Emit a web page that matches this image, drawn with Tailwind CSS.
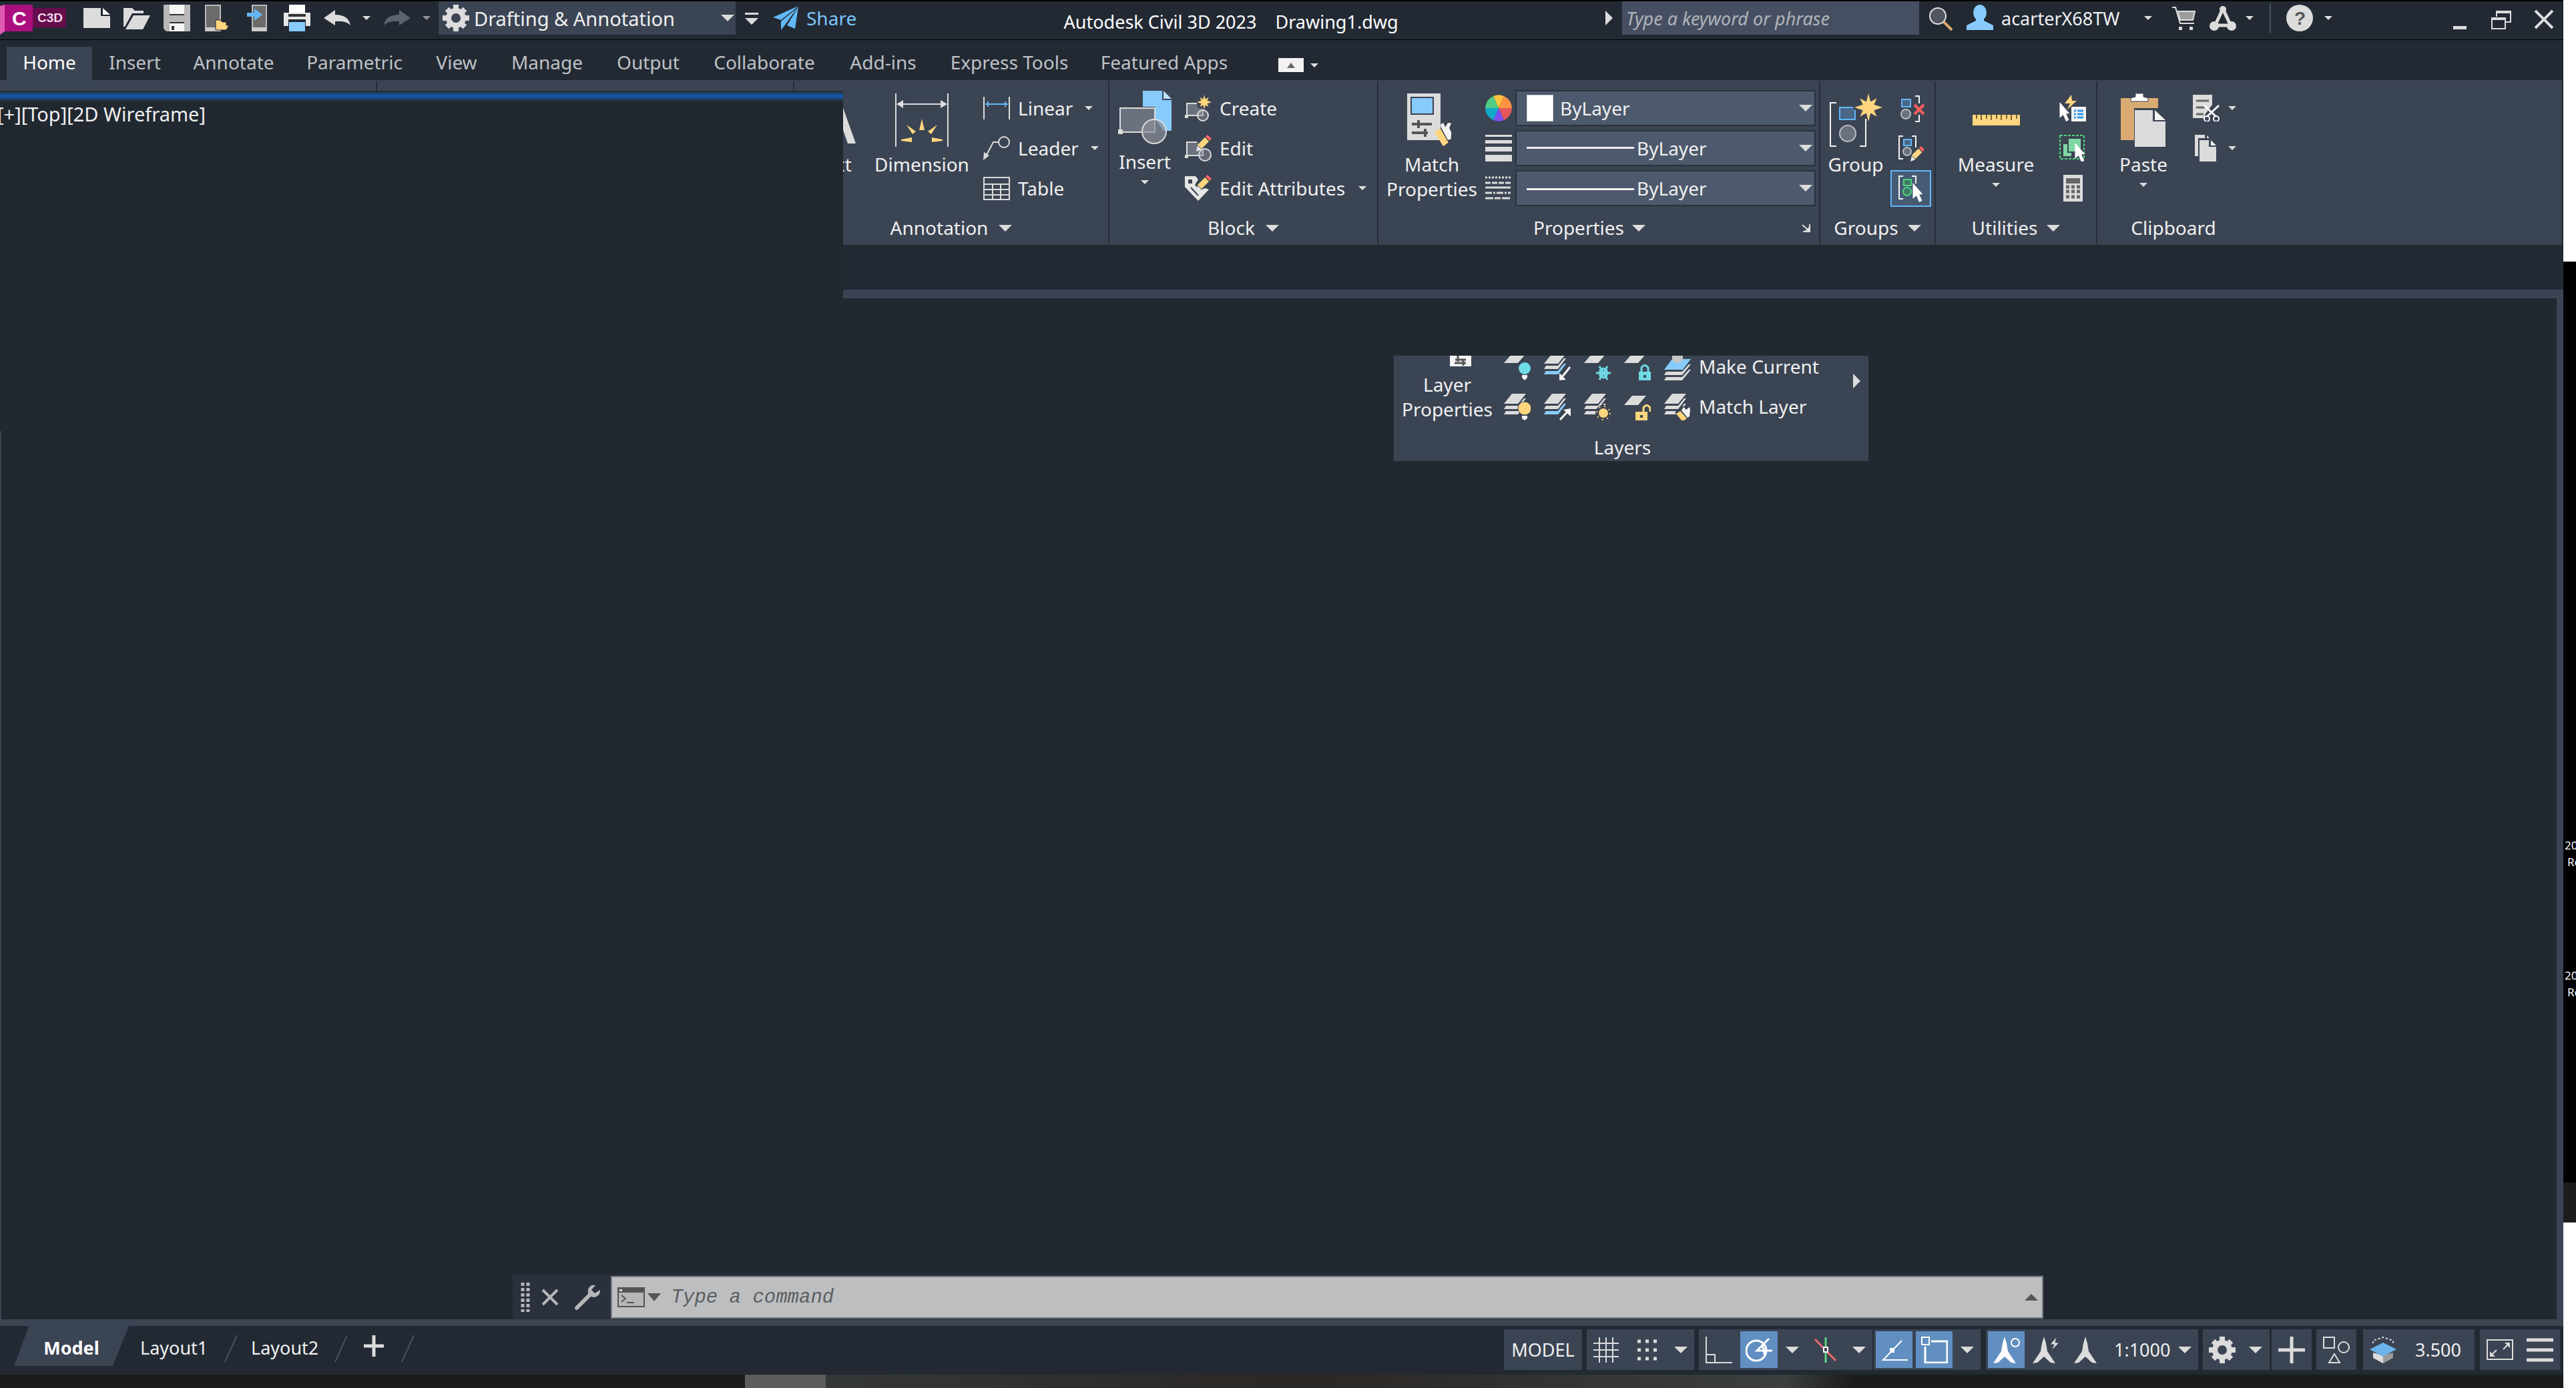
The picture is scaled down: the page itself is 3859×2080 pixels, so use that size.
<!DOCTYPE html>
<html lang="en">
<head>
<meta charset="utf-8">
<title>Autodesk Civil 3D 2023 - Drawing1.dwg</title>
<script src="https://cdn.jsdelivr.net/npm/@tailwindcss/browser@4"></script>
</head>
<body class="flex h-screen w-full overflow-hidden bg-black font-['Noto_Sans','Open_Sans',sans-serif] text-[28px] leading-[37px] text-[#f0f0f0]">

<!-- shared icon shapes -->
<svg class="hidden" aria-hidden="true">
  <symbol id="down" viewBox="0 0 20 10"><path d="M0 0H20L10 10Z" fill="#dcdcdc"/></symbol>
  <symbol id="gear" viewBox="0 0 40 40">
    <g fill="#dcdcdc"><rect x="16" y="0" width="8" height="40"/><rect x="0" y="16" width="40" height="8"/><rect x="16" y="1" width="8" height="38" transform="rotate(45 20 20)"/><rect x="16" y="1" width="8" height="38" transform="rotate(-45 20 20)"/><circle cx="20" cy="20" r="15"/></g>
    <circle cx="20" cy="20" r="7" fill="#3b4453"/>
  </symbol>
  <symbol id="pencil" viewBox="0 0 24 26"><path d="M1 25L3 16L9 22Z" fill="#e8e8e8"/><path d="M3 15L14 4L20 10L9 21Z" fill="#ffd57e"/><path d="M15 3L18 0L24 6L21 9Z" fill="#ff6464"/></symbol>
  <symbol id="star" viewBox="0 0 40 40"><path d="M20 0L23 12L32 7L28 16L40 20L28 24L32 33L23 28L20 40L17 28L8 33L12 24L0 20L12 16L8 7L17 12Z" fill="#ffd57e"/></symbol>
  <symbol id="pointer" viewBox="0 0 14 27"><path d="M0 0L14 16H9L13 25L9 27L5 18L0 22Z" fill="#fff"/></symbol>
  <symbol id="stack" viewBox="0 0 40 40">
    <path d="M12 0H33L21 15H0Z" fill="#dcdcdc"/><path d="M0 23L3 18H21L30 7H33L21 23Z" fill="#dcdcdc"/><path d="M0 31L3 26H21L30 15H33L21 31Z" fill="#dcdcdc"/>
  </symbol>
  <symbol id="brush" viewBox="0 0 40 56"><path d="M0 22L13 13L32 46L20 55Z" fill="#ffd57e"/><path d="M15 11L14 4L20 0L25 10L31 0L39 1L34 12L39 22L38 38L31 40Z" fill="#f4f4f4"/></symbol>
  <symbol id="scale-man" viewBox="0 0 40 40"><path d="M17 0L20 10L22 22L34 40L27 39L17 30L7 39L0 40L12 22L14 10Z" fill="currentColor"/></symbol>
</svg>

<div class="flex min-w-0 flex-1 flex-col bg-[#222933]">
  <div class="relative flex min-h-0 flex-1 flex-col">

  <!-- title bar -->
  <header class="flex h-[60px] shrink-0 border-t-2 border-b border-black">
    <div class="flex h-[50px] items-center">
      <svg class="h-[50px] w-[100px]" viewBox="0 0 100 50" role="img" aria-label="Civil 3D">
        <path d="M0 7L7 5V45L0 50Z" fill="#e05cb4"/><rect x="7" y="5" width="42" height="40" fill="#ab0f7e"/><rect x="49" y="10" width="50" height="29" fill="#640c4c"/>
        <text x="18" y="36" font-size="30" font-weight="700" fill="#fff" font-family="Liberation Sans, sans-serif">C</text>
        <text x="56" y="31" font-size="19" font-weight="700" fill="#f3d6ea" font-family="Liberation Sans, sans-serif">C3D</text>
      </svg>
      <div class="ml-[25px] flex items-center gap-5">
        <button aria-label="New"><svg class="size-10" viewBox="0 0 40 40"><path d="M0 5H26V17H40V35H0Z" fill="#dcdcdc"/><path d="M29 5L40 15H29Z" fill="#fff"/></svg></button>
        <button aria-label="Open"><svg class="size-10" viewBox="0 0 40 40"><path d="M0 5H13L17 9H30V13H13L2 33H0Z" fill="#dcdcdc"/><path d="M15 16H40L29 37H3Z" fill="#dcdcdc"/></svg></button>
        <button aria-label="Save"><svg class="size-10" viewBox="0 0 40 40"><path d="M0 0H40V40H4L0 36Z" fill="#b8b8b8"/><rect x="9" y="0" width="22" height="15" fill="#f6f6f6"/><path d="M9 15H31M9 27H31" stroke="#333" stroke-width="2"/><rect x="9" y="28" width="22" height="12" fill="#f6f6f6"/><rect x="12" y="32" width="4" height="6" fill="#333"/></svg></button>
        <button aria-label="Open from web and mobile"><svg class="size-10" viewBox="0 0 40 40"><rect x="3" y="1" width="22" height="38" fill="#6b6b6b" stroke="#bbb" stroke-width="2"/><rect x="3" y="34" width="22" height="6" fill="#ccc"/><path d="M18 23H25L28 26H34V31H38L34 38H18Z" fill="#ffd57e" stroke="#222933"/></svg></button>
        <button aria-label="Save to web and mobile"><svg class="size-10" viewBox="0 0 40 40"><rect x="13" y="1" width="21" height="38" fill="#6b6b6b" stroke="#bbb" stroke-width="2"/><rect x="13" y="34" width="21" height="6" fill="#ccc"/><path d="M5 12H16V6L28 15L16 24V18H5Z" fill="#62b8f8"/></svg></button>
        <button aria-label="Plot"><svg class="size-10" viewBox="0 0 40 40"><rect x="8" y="0" width="24" height="12" fill="#fff"/><path d="M0 12H40V32H33V22H7V32H0Z" fill="#e6e6e6"/><path d="M7 16H33" stroke="#333" stroke-width="4"/><rect x="8" y="26" width="24" height="14" fill="#87cbfc"/></svg></button>
        <button aria-label="Undo"><svg class="size-10" viewBox="0 0 40 40"><path d="M0 20L17 8V15C30 15 38 20 40 31C34 25 28 25 17 25V31Z" fill="#dcdcdc"/></svg></button>
      </div>
      <button class="ml-[18px]" aria-label="Undo list"><svg class="h-2 w-3"><use href="#down"/></svg></button>
      <button class="ml-5" aria-label="Redo"><svg class="size-10" viewBox="0 0 40 40"><path d="M40 20L23 8V15C10 15 2 20 0 31C6 25 12 25 23 25V31Z" fill="#5e646d"/></svg></button>
      <button class="ml-[18px] opacity-60" aria-label="Redo list"><svg class="h-2 w-3"><use href="#down"/></svg></button>
      <div class="relative ml-3 h-[50px] w-[445px]">
        <select aria-label="Workspace" class="h-full w-full appearance-none bg-[#3b4453] pl-[53px] text-[29px]"><option>Drafting &amp; Annotation</option></select>
        <svg class="pointer-events-none absolute top-[5px] left-[6px] size-10"><use href="#gear"/></svg>
        <svg class="pointer-events-none absolute top-5 right-[2px] h-[10px] w-5"><use href="#down"/></svg>
      </div>
      <button class="ml-[14px]" aria-label="Customize"><svg class="h-5 w-5" viewBox="0 0 20 20"><path d="M0 2H20V5H0ZM0 10H20L10 20Z" fill="#dcdcdc"/></svg></button>
      <a href="#" class="ml-[22px] flex items-center gap-3 text-[#7cc6fb]"><svg class="h-9 w-[38px]" viewBox="0 0 38 36"><path d="M0 17L38 0L12 21ZM12 36V23L36 3L19 27ZM21 29L38 1L33 34Z" fill="#62b8f8"/></svg>Share</a>
    </div>
    <h1 class="min-w-0 flex-1 truncate pt-3 text-center text-[27px] text-white">Autodesk Civil 3D 2023 &nbsp;&nbsp; Drawing1.dwg</h1>
    <div class="flex h-[50px] items-center">
      <button aria-label="Collapse search"><svg class="h-[22px] w-[11px]" viewBox="0 0 11 22"><path d="M0 0L11 11L0 22Z" fill="#dcdcdc"/></svg></button>
      <input aria-label="Search" placeholder="Type a keyword or phrase" class="ml-[14px] h-[50px] w-[445px] bg-[#464f61] px-[6px] text-[27px] italic placeholder:text-[#b0b4ba]">
      <button class="ml-[15px]" aria-label="Find"><svg class="size-10" viewBox="0 0 40 40"><circle cx="13" cy="17" r="12" fill="#4f565f" stroke="#e0e0e0" stroke-width="2"/><path d="M22 26L34 38" stroke="#d9a868" stroke-width="4"/></svg></button>
      <svg class="ml-4 size-10" viewBox="0 0 40 40"><ellipse cx="20" cy="12" rx="10" ry="12" fill="#87cbfc"/><path d="M14 20H26V24L40 31V38H0V31L14 24Z" fill="#87cbfc"/></svg>
      <button class="ml-3 flex w-[226px] items-center justify-between text-[27px]">acarterX68TW <svg class="h-2 w-3"><use href="#down"/></svg></button>
      <button class="ml-[30px]" aria-label="App store"><svg class="size-10" viewBox="0 0 40 40"><path d="M0 4H5L12 28H33" stroke="#dcdcdc" stroke-width="2" fill="none"/><path d="M8 10H34L31 23H12Z" fill="#9c9c9c" stroke="#dcdcdc" stroke-width="2"/><rect x="10" y="33" width="5" height="5" fill="#dcdcdc"/><rect x="26" y="33" width="5" height="5" fill="#dcdcdc"/></svg></button>
      <button class="ml-4" aria-label="Autodesk app"><svg class="size-10" viewBox="0 0 40 40"><path d="M20 6L8 32M20 6L32 32M8 31H32" stroke="#dcdcdc" stroke-width="5" fill="none"/><circle cx="20" cy="7" r="5" fill="#dcdcdc"/><circle cx="7" cy="32" r="7" fill="#dcdcdc"/><circle cx="33" cy="32" r="7" fill="#dcdcdc"/></svg></button>
      <button class="ml-[14px]" aria-label="Autodesk app menu"><svg class="h-2 w-3"><use href="#down"/></svg></button>
      <span class="ml-6 h-[45px] w-[2px] bg-[#464f61]"></span>
      <button class="ml-[22px]" aria-label="Help"><svg class="size-[42px]" viewBox="0 0 42 42"><circle cx="21" cy="21" r="20" fill="#dcdcdc"/><text x="13" y="31" font-size="28" font-weight="700" fill="#555" font-family="Liberation Sans, sans-serif">?</text></svg></button>
      <button class="ml-4" aria-label="Help menu"><svg class="h-2 w-3"><use href="#down"/></svg></button>
      <button class="ml-[181px]" aria-label="Minimize"><svg class="h-10 w-5" viewBox="0 0 20 40"><rect y="32" width="20" height="5" fill="#dcdcdc"/></svg></button>
      <button class="ml-[37px]" aria-label="Restore"><svg class="h-10 w-[30px]" viewBox="0 0 30 40"><path d="M8 18V10H29V26H22M1 20H21V36H1Z" stroke="#dcdcdc" stroke-width="2" fill="none"/><path d="M8 11H29M1 21H21" stroke="#dcdcdc" stroke-width="4"/></svg></button>
      <button class="mr-[14px] ml-[34px]" aria-label="Close"><svg class="h-10 w-[30px]" viewBox="0 0 30 40"><path d="M2 9L28 35M28 9L2 35" stroke="#dcdcdc" stroke-width="4"/></svg></button>
    </div>
  </header>

  <!-- ribbon tabs -->
  <nav class="flex h-[60px] shrink-0 items-end pl-[10px] text-[#bfc2c6]">
    <a href="#" class="w-[128px] bg-[#3b4453] pt-[5px] pb-2 text-center text-white">Home</a>
    <a href="#" class="w-[128px] pt-[5px] pb-2 text-center">Insert</a>
    <a href="#" class="w-[168px] pt-[5px] pb-2 text-center">Annotate</a>
    <a href="#" class="w-[194px] pt-[5px] pb-2 text-center">Parametric</a>
    <a href="#" class="w-[112px] pt-[5px] pb-2 text-center">View</a>
    <a href="#" class="w-[159px] pt-[5px] pb-2 text-center">Manage</a>
    <a href="#" class="w-[144px] pt-[5px] pb-2 text-center">Output</a>
    <a href="#" class="w-[204px] pt-[5px] pb-2 text-center">Collaborate</a>
    <a href="#" class="w-[152px] pt-[5px] pb-2 text-center">Add-ins</a>
    <a href="#" class="w-[226px] pt-[5px] pb-2 text-center">Express Tools</a>
    <a href="#" class="w-[238px] pt-[5px] pb-2 text-center">Featured Apps</a>
    <button class="mb-3 ml-[52px] flex items-center gap-[10px]" aria-label="Minimize ribbon"><svg class="h-[21px] w-[38px]" viewBox="0 0 38 21"><rect width="38" height="21" fill="#f2f2f2"/><path d="M13 15L19 7L25 15Z" fill="#666"/></svg><svg class="h-2 w-3"><use href="#down"/></svg></button>
  </nav>

  <!-- ribbon -->
  <div class="mr-[2px] flex h-[247px] shrink-0 bg-[#3b4453]">
    <section class="my-[2px] w-[565px] shrink-0 border-r-2 border-[#262d38]"></section>
    <section class="my-[2px] w-[625px] shrink-0 border-r-2 border-[#262d38]"></section>

    <section class="my-[2px] flex w-[472px] shrink-0 flex-col border-r-2 border-[#262d38] pt-[10px]">
      <div class="flex h-[191px]">
        <button class="ml-[19px] flex w-20 flex-col items-center gap-2 pt-2"><svg class="size-20" viewBox="0 0 80 80"><path d="M32 5H48L73 75H61L54 55H26L19 75H7Z" fill="#dcdcdc"/></svg>Text</button>
        <button class="ml-[17px] flex w-[150px] flex-col items-center gap-2 pt-2"><svg class="size-20" viewBox="0 0 80 80"><path d="M1 0V80M79 0V80M4 16H76" stroke="#dcdcdc" stroke-width="2"/><path d="M2 16L12 10V22ZM78 16L68 10V22Z" fill="#dcdcdc"/><path d="M40 38L44 55H36ZM17 47L31 57L26 61ZM63 47L49 57L54 61ZM9 69L25 66V73L9 71ZM71 69L55 66V73L71 71Z" fill="#ffd57e"/></svg>Dimension</button>
        <div class="ml-[17px] flex flex-col">
          <button class="flex h-[60px] items-center"><svg class="size-10" viewBox="0 0 40 40"><path d="M1 3V37M39 3V37" stroke="#dcdcdc" stroke-width="2"/><path d="M3 14H37M7 10V18M33 10V18" stroke="#62b8f8" stroke-width="2"/></svg><span class="mr-[18px] ml-3">Linear</span><svg class="h-2 w-3"><use href="#down"/></svg></button>
          <button class="flex h-[60px] items-center"><svg class="size-10" viewBox="0 0 40 40"><path d="M4 32L15 11H24" stroke="#dcdcdc" stroke-width="2" fill="none"/><circle cx="31" cy="11" r="8" stroke="#dcdcdc" stroke-width="2" fill="none"/><path d="M0 38L1 26L9 31Z" fill="#dcdcdc"/></svg><span class="mr-[18px] ml-3">Leader</span><svg class="h-2 w-3"><use href="#down"/></svg></button>
          <button class="flex h-[60px] items-center"><svg class="size-10" viewBox="0 0 40 40"><path d="M1 4H39V37H1ZM1 14H39M1 22H39M1 30H39M14 14V37M26 14V37" stroke="#dcdcdc" stroke-width="2" fill="none"/></svg><span class="ml-3">Table</span></button>
        </div>
      </div>
      <button class="flex items-center justify-center gap-4">Annotation <svg class="h-[10px] w-5"><use href="#down"/></svg></button>
    </section>

    <section class="my-[2px] flex w-[403px] shrink-0 flex-col border-r-2 border-[#262d38] pt-[10px]">
      <div class="flex h-[191px]">
        <button class="ml-[13px] flex w-20 flex-col items-center gap-2 pt-1"><svg class="size-20" viewBox="0 0 80 80"><path d="M37 0H66V14H80V60H68L56 42V24H37Z" fill="#87cbfc"/><path d="M68 0L80 12H68Z" fill="#b9e0fc"/><rect x="3" y="26" width="52" height="36" fill="#6b717d" stroke="#dcdcdc" stroke-width="2"/><rect x="0" y="58" width="7" height="7" fill="#dcdcdc"/><circle cx="54" cy="61" r="18" fill="#8b909a" fill-opacity=".7" stroke="#dcdcdc" stroke-width="2"/></svg>Insert<svg class="h-2 w-3"><use href="#down"/></svg></button>
        <div class="ml-5 flex flex-col">
          <button class="flex h-[60px] items-center"><svg class="size-10" viewBox="0 0 40 40"><path d="M3 13H18L20 20H27V31H3Z" fill="#6b717d"/><path d="M18 13H3V31H27V22" stroke="#dcdcdc" stroke-width="2" fill="none"/><rect x="0" y="30" width="5" height="5" fill="#dcdcdc"/><circle cx="27" cy="31" r="8" fill="#8b909a" fill-opacity=".5" stroke="#dcdcdc" stroke-width="2"/><use href="#star" x="18" y="0" width="22" height="22"/></svg><span class="ml-3">Create</span></button>
          <button class="flex h-[60px] items-center"><svg class="size-10" viewBox="0 0 40 40"><path d="M3 11H20V20H27V31H3Z" fill="#6b717d"/><path d="M18 11H3V31H27V22" stroke="#dcdcdc" stroke-width="2" fill="none"/><rect x="0" y="30" width="5" height="5" fill="#dcdcdc"/><circle cx="30" cy="30" r="9" fill="#8b909a" fill-opacity=".5" stroke="#dcdcdc" stroke-width="2"/><use href="#pencil" x="16" y="0" width="24" height="26"/></svg><span class="ml-3">Edit</span></button>
          <button class="flex h-[60px] items-center"><svg class="size-10" viewBox="0 0 40 40"><path d="M0 2H16L20 7L15 15L22 23L31 20L36 22L20 39L0 18Z" fill="#e6e6e6"/><rect x="5" y="7" width="6" height="6" fill="#3b4453"/><path d="M9 19L20 31" stroke="#3b4453" stroke-width="2"/><use href="#pencil" x="16" y="0" width="24" height="26"/></svg><span class="mr-5 ml-3">Edit Attributes</span><svg class="h-2 w-3"><use href="#down"/></svg></button>
        </div>
      </div>
      <button class="flex items-center justify-center gap-4">Block <svg class="h-[10px] w-5"><use href="#down"/></svg></button>
    </section>

    <section class="my-[2px] flex w-[662px] shrink-0 flex-col border-r-2 border-[#262d38] pt-[10px]">
      <div class="flex h-[191px]">
        <button class="ml-[10px] flex w-[140px] flex-col items-center gap-2 pt-2"><svg class="size-20" viewBox="0 0 80 80"><rect x="3" y="0" width="50" height="70" fill="#dcdcdc"/><rect x="9" y="6" width="33" height="25" fill="#87cbfc" stroke="#3b4453" stroke-width="2"/><path d="M10 46H40M20 40V52M10 59H34M30 53V65" stroke="#555" stroke-width="4"/><use href="#brush" x="36" y="44" width="42" height="36"/></svg><span>Match<br>Properties</span></button>
        <div class="ml-[10px] flex flex-col gap-5 pt-[10px]">
          <svg class="size-10" viewBox="0 0 40 40"><path d="M20 20L12 2A20 20 0 0 1 28 2Z" fill="#ffc43d"/><path d="M20 20L28 2A20 20 0 0 1 40 20Z" fill="#ff9340"/><path d="M20 20H40A20 20 0 0 1 28 38Z" fill="#e5575c"/><path d="M20 20L28 38A20 20 0 0 1 12 38Z" fill="#7f4ff5"/><path d="M20 20L12 38A20 20 0 0 1 0 20Z" fill="#12aacb"/><path d="M20 20H0A20 20 0 0 1 12 2Z" fill="#53cb82"/></svg>
          <svg class="size-10" viewBox="0 0 40 40" fill="#dcdcdc"><rect width="40" height="3"/><rect y="8" width="40" height="5"/><rect y="18" width="40" height="7"/><rect y="30" width="40" height="10"/></svg>
          <svg class="size-10" viewBox="0 0 40 40" stroke="#dcdcdc" stroke-width="3"><path d="M0 4H38" stroke-dasharray="3 2"/><path d="M0 12H38" stroke-dasharray="8 2"/><path d="M0 19H38"/><path d="M0 27H38" stroke-dasharray="10 2 3 2"/><path d="M0 35H38" stroke-dasharray="12 2 9 2"/></svg>
        </div>
        <div class="ml-[5px] flex flex-col gap-[6px] pt-[3px]">
          <div class="relative h-[54px] w-[450px]"><select aria-label="Color" class="h-full w-full appearance-none border-2 border-[#2a313d] bg-[#4d596c] pl-[65px]"><option>ByLayer</option></select><span class="pointer-events-none absolute top-[7px] left-[17px] size-10 border border-[#ccc] bg-white"></span><svg class="pointer-events-none absolute top-[22px] right-[5px] h-[10px] w-5"><use href="#down"/></svg></div>
          <div class="relative h-[54px] w-[450px]"><select aria-label="Lineweight" class="h-full w-full appearance-none border-2 border-[#2a313d] bg-[#4d596c] pl-[180px]"><option>ByLayer</option></select><span class="pointer-events-none absolute top-[25px] left-[17px] h-[3px] w-[161px] bg-[#f0f0f0]"></span><svg class="pointer-events-none absolute top-[22px] right-[5px] h-[10px] w-5"><use href="#down"/></svg></div>
          <div class="relative h-[54px] w-[450px]"><select aria-label="Linetype" class="h-full w-full appearance-none border-2 border-[#2a313d] bg-[#4d596c] pl-[180px]"><option>ByLayer</option></select><span class="pointer-events-none absolute top-[27px] left-[17px] h-[3px] w-[161px] bg-[#f0f0f0]"></span><svg class="pointer-events-none absolute top-[22px] right-[5px] h-[10px] w-5"><use href="#down"/></svg></div>
        </div>
      </div>
      <div class="flex items-center pl-[232px]"><button class="flex items-center gap-3">Properties <svg class="h-[10px] w-5"><use href="#down"/></svg></button>
      <button class="mr-[13px] ml-auto" aria-label="Properties dialog"><svg class="h-3 w-[13px]" viewBox="0 0 13 12"><path d="M1 1L9 8M12 0V11H2" stroke="#dcdcdc" stroke-width="2" fill="none"/><path d="M12 3V11H4Z" fill="#dcdcdc"/></svg></button></div>
    </section>

    <section class="my-[2px] flex w-[173px] shrink-0 flex-col border-r-2 border-[#262d38] pt-[10px]">
      <div class="flex h-[191px]">
        <button class="ml-[13px] flex w-20 flex-col items-center gap-2 pt-2"><svg class="size-20" viewBox="0 0 80 80"><path d="M11 14H2V79H11M46 79H55V38" stroke="#f4f4f4" stroke-width="2" fill="none"/><path d="M36 21H16V39H39V25" stroke="#62b8f8" stroke-width="2" fill="#4a6788"/><circle cx="28" cy="60" r="12" fill="#6b717d" stroke="#b8bbc0" stroke-width="2"/><use href="#star" x="38" y="0" width="42" height="42"/></svg>Group</button>
        <div class="ml-3 flex w-[61px] flex-col gap-[5px] pt-[3px]">
          <button class="flex h-[55px] items-center justify-center" aria-label="Ungroup"><svg class="size-10" viewBox="0 0 40 40"><rect x="6" y="6" width="13" height="11" fill="#4a6788" stroke="#62b8f8" stroke-width="2"/><circle cx="12" cy="28" r="7" fill="#6b717d" stroke="#b8bbc0" stroke-width="2"/><path d="M26 1H32V12M32 29V39H26" stroke="#f4f4f4" stroke-width="2" fill="none"/><path d="M25 14L39 28M39 14L25 28" stroke="#ff5c5c" stroke-width="4"/></svg></button>
          <button class="flex h-[55px] items-center justify-center" aria-label="Group edit"><svg class="size-10" viewBox="0 0 40 40"><path d="M8 1H2V35H8M21 1H27V18" stroke="#f4f4f4" stroke-width="2" fill="none"/><rect x="9" y="6" width="11" height="9" fill="#4a6788" stroke="#62b8f8" stroke-width="2"/><circle cx="14" cy="24" r="6" fill="#6b717d" stroke="#b8bbc0" stroke-width="2"/><use href="#pencil" x="18" y="16" width="22" height="24"/></svg></button>
          <button class="flex h-[55px] items-center justify-center border-2 border-[#62b8f8] bg-[#465b74]" aria-label="Group selection on/off"><svg class="size-10" viewBox="0 0 40 40"><path d="M8 1H2V35H8M21 1H27V12" stroke="#f4f4f4" stroke-width="2" fill="none"/><rect x="9" y="6" width="11" height="9" fill="#3f7a67" stroke="#4fd47c" stroke-width="2"/><circle cx="14" cy="24" r="6" fill="#3f7a67" stroke="#4fd47c" stroke-width="2"/><use href="#pointer" x="22" y="11" width="16" height="29"/></svg></button>
        </div>
      </div>
      <button class="flex items-center justify-center gap-[14px]">Groups <svg class="h-[10px] w-5"><use href="#down"/></svg></button>
    </section>

    <section class="my-[2px] flex w-[242px] shrink-0 flex-col border-r-2 border-[#262d38] pt-[10px]">
      <div class="flex h-[191px]">
        <button class="ml-[30px] flex w-[120px] flex-col items-center gap-2 pt-2"><svg class="size-20" viewBox="0 0 80 80"><rect x="5" y="32" width="71" height="16" fill="#ffd57e"/><path d="M11 32V38M18 32V40M26 32V38M33 32V40M41 32V38M48 32V40M56 32V38M63 32V40M71 32V38" stroke="#7a6636" stroke-width="2"/></svg>Measure<svg class="h-2 w-3"><use href="#down"/></svg></button>
        <div class="ml-[35px] flex flex-col gap-5 pt-[10px]">
          <button aria-label="Quick select"><svg class="size-10" viewBox="0 0 40 40"><use href="#pointer" x="0" y="11" width="16" height="29"/><path d="M18 0L8 13H16L12 22L26 9H19Z" fill="#ffd57e"/><rect x="18" y="18" width="22" height="22" fill="#f4f4f4"/><path d="M22 24H25M27 24H36M22 29H25M27 29H36M22 34H25M27 34H36" stroke="#2c96e8" stroke-width="3"/></svg></button>
          <button aria-label="Select all"><svg class="size-10" viewBox="0 0 40 40"><rect x="1" y="1" width="36" height="35" fill="none" stroke="#4fd47c" stroke-width="2" stroke-dasharray="4 2"/><path d="M14 6H32V25H14ZM6 14H12V27H18V32H6Z" fill="#7fd6a0"/><use href="#pointer" x="23" y="12" width="16" height="29"/></svg></button>
          <button aria-label="Quick calculator"><svg class="size-10" viewBox="0 0 40 40"><rect x="6" y="0" width="29" height="40" fill="#dcdcdc"/><rect x="10" y="5" width="21" height="8" fill="#666"/><path d="M10 18H31M10 25H31M10 33H31" stroke="#666" stroke-width="5" stroke-dasharray="5 3"/></svg></button>
        </div>
      </div>
      <button class="flex items-center justify-center gap-[14px]">Utilities <svg class="h-[10px] w-5"><use href="#down"/></svg></button>
    </section>

    <section class="my-[2px] flex w-[228px] shrink-0 flex-col pt-[10px]">
      <div class="flex h-[191px]">
        <button class="ml-[29px] flex w-20 flex-col items-center gap-2 pt-2"><svg class="size-20" viewBox="0 0 80 80"><path d="M6 7H62V22H26V70H6Z" fill="#d9ab73"/><path d="M21 12V7L28 5V0H40V5L47 7V12Z" fill="#fff" stroke="#3b4453"/><path d="M27 25H54V42H73V80H27Z" fill="#dcdcdc"/><path d="M57 25L73 40H57Z" fill="#f4f4f4"/></svg>Paste<svg class="h-2 w-3"><use href="#down"/></svg></button>
        <div class="ml-[34px] flex flex-col">
          <button class="flex h-[60px] items-center gap-[13px]" aria-label="Cut"><svg class="size-10" viewBox="0 0 40 40"><path d="M0 0H29V15L18 30V35H0Z" fill="#dcdcdc"/><path d="M5 9H24M5 19H18M5 29H16" stroke="#666" stroke-width="3"/><path d="M17 16L34 32M39 16L22 32" stroke="#fff" stroke-width="3"/><circle cx="21" cy="36" r="4" fill="none" stroke="#fff" stroke-width="2"/><circle cx="35" cy="36" r="4" fill="none" stroke="#fff" stroke-width="2"/></svg><svg class="h-2 w-3"><use href="#down"/></svg></button>
          <button class="flex h-[60px] items-center gap-[13px]" aria-label="Copy"><svg class="size-10" viewBox="0 0 40 40"><path d="M3 0H18V5H8V32H3Z" fill="#dcdcdc"/><path d="M21 1L25 5H21Z" fill="#dcdcdc"/><path d="M10 8H24V18H35V40H10Z" fill="#dcdcdc"/><path d="M27 8L35 16H27Z" fill="#f4f4f4"/></svg><svg class="h-2 w-3"><use href="#down"/></svg></button>
        </div>
      </div>
      <span class="text-center">Clipboard</span>
    </section>
  </div>

  <!-- drawing area -->
  <div class="h-[67px] shrink-0"></div>
  <main class="relative flex min-h-0 flex-1 flex-col justify-end border-t-[13px] border-r-[10px] border-b-[10px] border-l-2 border-[#3b4453] bg-[#212830]">
    <!-- torn-off Layers panel -->
    <section class="absolute top-[86px] left-[2086px] flex h-[158px] w-[711px] flex-col justify-end overflow-hidden bg-[#3b4453] pb-[2px]">
      <div class="flex items-end">
        <button class="ml-[14px] flex w-[132px] flex-col items-center"><svg class="ml-10 h-5 w-8" viewBox="0 0 32 20"><rect width="32" height="20" fill="#f4f4f4"/><path d="M8 10H24M12 3V13M7 15H24M20 11V19" stroke="#555" stroke-width="3"/></svg><span class="mt-[9px] text-center">Layer<br>Properties</span></button>
        <div class="mb-[2px] ml-[19px] grid grid-cols-[repeat(5,40px)] gap-5">
          <button aria-label="Layer off"><svg class="size-10" viewBox="0 0 40 40"><path d="M12 0H33L21 14H0Z" fill="#dcdcdc"/><circle cx="31" cy="22" r="9" fill="#6fdbe6"/><path d="M27 32H35V36L31 40L27 36Z" fill="#f4f4f4"/></svg></button>
          <button aria-label="Isolate"><svg class="size-10" viewBox="0 0 40 40"><use href="#stack"/><path d="M0 31L3 26H21L30 15H33L21 31Z" fill="#87cbfc"/><path d="M39 20L27 35" stroke="#f4f4f4" stroke-width="3"/><path d="M23 40V29L33 39Z" fill="#f4f4f4"/></svg></button>
          <button aria-label="Freeze"><svg class="size-10" viewBox="0 0 40 40"><path d="M12 0H33L21 14H0Z" fill="#dcdcdc"/><path d="M18 29H40M23 19L35 39M35 19L23 39M24 25L29 22L34 25V33L29 36L24 33Z" stroke="#6fdbe6" stroke-width="3" fill="none"/></svg></button>
          <button aria-label="Lock"><svg class="size-10" viewBox="0 0 40 40"><path d="M12 0H33L21 14H0Z" fill="#dcdcdc"/><rect x="22" y="27" width="18" height="13" fill="#6fdbe6"/><path d="M26 28V21Q31 14 36 21V28" stroke="#6fdbe6" stroke-width="3" fill="none"/><rect x="29" y="32" width="4" height="4" fill="#3b4453"/></svg></button>
          <button aria-label="Make current"><svg class="size-10" viewBox="0 0 40 40"><path d="M12 8H40L28 24H0Z" fill="#87cbfc"/><path d="M0 32L3 27H27L37 16H40L27 32ZM0 40L3 35H27L37 24H40L27 40Z" fill="#dcdcdc"/><path d="M12 0H28V10L20 15L12 10Z" fill="#c4c4c4"/></svg></button>
          <button aria-label="Turn all layers on"><svg class="size-10" viewBox="0 0 40 40"><use href="#stack"/><circle cx="31" cy="22" r="10" fill="#ffd57e" stroke="#3b4453"/><path d="M27 33H35V37L31 40L27 37Z" fill="#f4f4f4"/></svg></button>
          <button aria-label="Unisolate"><svg class="size-10" viewBox="0 0 40 40"><use href="#stack"/><path d="M0 31L3 26H21L30 15H33L21 31Z" fill="#87cbfc"/><path d="M24 39L36 26" stroke="#f4f4f4" stroke-width="3"/><path d="M40 22V34L29 24Z" fill="#f4f4f4"/></svg></button>
          <button aria-label="Thaw"><svg class="size-10" viewBox="0 0 40 40"><use href="#stack"/><circle cx="29" cy="29" r="12" fill="#3b4453"/><circle cx="29" cy="29" r="7" fill="#ffd57e"/><circle cx="29" cy="29" r="10" fill="none" stroke="#ffd57e" stroke-width="2" stroke-dasharray="2 6"/></svg></button>
          <button aria-label="Unlock"><svg class="size-10" viewBox="0 0 40 40"><path d="M12 3H33L21 17H0Z" fill="#dcdcdc"/><rect x="17" y="27" width="18" height="13" fill="#ffd57e"/><path d="M29 27V21Q34 14 39 21V27" stroke="#ffd57e" stroke-width="3" fill="none"/><rect x="24" y="32" width="4" height="4" fill="#3b4453"/></svg></button>
          <button aria-label="Match layer"><svg class="size-10" viewBox="0 0 40 40"><use href="#stack"/><path d="M16 28L28 18L40 28L34 40H26Z" fill="#3b4453"/><path d="M18 30L24 26L34 37L30 40H26Z" fill="#ffd57e"/><path d="M26 25L29 20L33 24L38 20L39 24L38 34L35 36Z" fill="#f4f4f4"/></svg></button>
        </div>
        <div class="mb-1 ml-3 flex flex-col gap-[23px]"><a href="#">Make Current</a><a href="#">Match Layer</a></div>
        <button class="mr-3 mb-[50px] ml-auto" aria-label="Expand"><svg class="h-[22px] w-[11px]" viewBox="0 0 11 22"><path d="M0 0L11 11L0 22Z" fill="#dcdcdc"/></svg></button>
      </div>
      <span class="mt-5 pr-[26px] text-center">Layers</span>
    </section>

    <!-- command line -->
    <div class="ml-[20%] flex h-[67px] w-[59.9%] bg-[#2a303c]">
      <div class="flex w-[147px] items-center">
        <svg class="ml-3 h-[44px] w-[14px]" viewBox="0 0 14 44"><path d="M3 0V44M11 0V44" stroke="#b4b6b8" stroke-width="5" stroke-dasharray="5 3"/></svg>
        <button class="ml-4" aria-label="Close command line"><svg class="size-7" viewBox="0 0 28 28"><path d="M3 3L25 25M25 3L3 25" stroke="#b4b6b8" stroke-width="4"/></svg></button>
        <button class="ml-[22px]" aria-label="Customize command line"><svg class="size-10" viewBox="0 0 40 40"><path d="M4 36L25 15" stroke="#b4b6b8" stroke-width="6" stroke-linecap="round"/><path d="M22 16C18 8 24 0 32 2L26 9L31 14L39 9C40 17 32 22 26 19Z" fill="#b4b6b8"/></svg></button>
      </div>
      <div class="mt-[2px] flex h-16 flex-1 items-center border-2 border-[#777d85] bg-[#bcbec0]">
        <button class="ml-2 flex items-center gap-1" aria-label="Recent commands"><svg class="h-[30px] w-[41px]" viewBox="0 0 41 30"><rect x="1" y="1" width="39" height="28" fill="#b4b6b8" stroke="#555" stroke-width="2"/><rect width="41" height="8" fill="#555"/><rect x="3" y="3" width="4" height="3" fill="#ddd"/><path d="M6 12L12 17L6 22M14 23H25" stroke="#555" stroke-width="2" fill="none"/></svg><svg class="h-3 w-5" viewBox="0 0 20 12"><path d="M0 0H20L10 12Z" fill="#555"/></svg></button>
        <input aria-label="Command" placeholder="Type a command" class="ml-4 min-w-0 flex-1 bg-transparent font-['Liberation_Mono',monospace] text-[29px] italic placeholder:text-[#5c5e60]">
        <button class="mr-[6px]" aria-label="Command history"><svg class="h-[10px] w-5" viewBox="0 0 20 10"><path d="M0 10H20L10 0Z" fill="#555"/></svg></button>
      </div>
    </div>
  </main>

  <!-- viewport strip lying over the left of the ribbon -->
  <div class="absolute top-[136px] left-0 h-[510px] w-[1263px] overflow-hidden bg-[#212830]">
    <div class="h-4 bg-gradient-to-b from-[#212830] via-[#0a5cb4] to-[#212830]"></div>
    <span class="-ml-1 block text-[29px]">[+][Top][2D Wireframe]</span>
  </div>
  </div>

  <!-- layout tabs and status bar -->
  <footer class="flex h-[73px] shrink-0 justify-between text-[27px]">
    <div class="flex h-[60px] items-center pl-[21px]">
      <a href="#" class="flex h-[60px] w-[172px] items-center justify-center bg-[#3b4453] pt-[5px] font-bold text-white [clip-path:polygon(13%_0,100%_0,86%_100%,0_100%)]">Model</a>
      <a href="#" class="ml-[17px] w-[126px] pt-[5px]">Layout1</a>
      <svg class="mt-2 h-10 w-5" viewBox="0 0 20 40"><path d="M1 40L19 0" stroke="#4a5362" stroke-width="2"/></svg>
      <a href="#" class="ml-5 w-[125px] pt-[5px]">Layout2</a>
      <svg class="mt-2 h-10 w-5" viewBox="0 0 20 40"><path d="M1 40L19 0" stroke="#4a5362" stroke-width="2"/></svg>
      <button class="ml-6" aria-label="New layout"><svg class="h-[32px] w-[30px]" viewBox="0 0 30 32"><path d="M15 0V32M0 16H30" stroke="#dcdcdc" stroke-width="5"/></svg></button>
      <svg class="mt-2 ml-[26px] h-10 w-5" viewBox="0 0 20 40"><path d="M1 40L19 0" stroke="#4a5362" stroke-width="2"/></svg>
    </div>
    <div class="mt-[5px] mr-[5px] flex h-[61px]">
      <button class="w-[117px] bg-[#3b4453] text-center">MODEL</button>
      <div class="ml-[7px] flex w-[161px] items-center bg-[#3b4453]">
        <button class="ml-[10px]" aria-label="Grid"><svg class="size-10" viewBox="0 0 40 40"><path d="M9 1V39M19 1V39M29 1V39M0 10H38M0 20H38M0 30H38" stroke="#dcdcdc" stroke-width="2"/></svg></button>
        <button class="ml-5" aria-label="Snap"><svg class="size-10" viewBox="0 0 40 40"><path d="M6 7H38M6 20H38M6 33H38" stroke="#dcdcdc" stroke-width="5" stroke-dasharray="5 7"/></svg></button>
        <button class="ml-[21px]" aria-label="Snap menu"><svg class="h-[10px] w-5"><use href="#down"/></svg></button>
      </div>
      <div class="ml-[7px] flex w-[260px] items-center bg-[#3b4453]">
        <button class="ml-[10px]" aria-label="Ortho"><svg class="size-10" viewBox="0 0 40 40"><path d="M1 0V39H40M1 27H14V39" stroke="#dcdcdc" stroke-width="2" fill="none"/></svg></button>
        <button class="ml-3 flex h-[55px] w-[56px] items-center justify-center bg-[#618fc1]" aria-label="Polar tracking"><svg class="size-10" viewBox="0 0 40 40"><circle cx="16" cy="21" r="15" stroke="#fff" stroke-width="3" fill="none"/><path d="M35 3L17 21H40M24 13Q28 17 28 27" stroke="#fff" stroke-width="3" fill="none"/></svg></button>
        <button class="ml-3" aria-label="Polar menu"><svg class="h-[10px] w-5"><use href="#down"/></svg></button>
        <button class="ml-5" aria-label="Isometric drafting"><svg class="size-10" viewBox="0 0 40 40"><path d="M4 4L35 36" stroke="#e66a6e" stroke-width="3"/><path d="M20 1V39" stroke="#5fd382" stroke-width="3"/><rect x="17" y="16" width="6" height="7" fill="#3b4453" stroke="#fff" stroke-width="2"/></svg></button>
        <button class="ml-5" aria-label="Isometric menu"><svg class="h-[10px] w-5"><use href="#down"/></svg></button>
      </div>
      <div class="ml-[2px] flex w-[160px] items-center bg-[#3b4453]">
        <button class="ml-[3px] flex h-[55px] w-[55px] items-center justify-center bg-[#618fc1]" aria-label="Object snap tracking"><svg class="size-10" viewBox="0 0 40 40"><path d="M31 6L3 35H40" stroke="#fff" stroke-width="2" fill="none"/><rect x="13" y="17" width="7" height="7" fill="#fff"/></svg></button>
        <button class="ml-[5px] flex h-[55px] w-[55px] items-center justify-center bg-[#618fc1]" aria-label="Object snap"><svg class="size-10" viewBox="0 0 40 40"><rect x="1" y="1" width="11" height="11" stroke="#fff" stroke-width="2" fill="none"/><path d="M15 7H39V39H6V15" stroke="#fff" stroke-width="3" fill="none"/></svg></button>
        <button class="ml-3" aria-label="Object snap menu"><svg class="h-[10px] w-5"><use href="#down"/></svg></button>
      </div>
      <div class="ml-2 flex w-[318px] items-center bg-[#3b4453]">
        <button class="ml-[3px] flex h-[55px] w-[55px] items-center justify-center bg-[#618fc1] text-white" aria-label="Annotation visibility"><svg class="size-10" viewBox="0 0 40 40"><use href="#scale-man" width="40" height="40"/><circle cx="33" cy="9" r="6" stroke="#fff" stroke-width="2" fill="none"/></svg></button>
        <button class="ml-3 text-[#dcdcdc]" aria-label="Auto scale"><svg class="size-10" viewBox="0 0 40 40"><use href="#scale-man" width="40" height="40"/><path d="M36 0L26 12H32L28 21L40 9H34Z" fill="#dcdcdc" stroke="#3b4453" stroke-width="1"/></svg></button>
        <button class="ml-[22px] text-[#dcdcdc]" aria-label="Annotation scale"><svg class="size-10"><use href="#scale-man"/></svg></button>
        <button class="ml-5 flex w-[116px] items-center justify-between">1:1000 <svg class="h-[10px] w-5"><use href="#down"/></svg></button>
      </div>
      <div class="ml-[7px] flex w-[100px] items-center bg-[#3b4453]">
        <button class="ml-[9px]" aria-label="Workspace switching"><svg class="size-10"><use href="#gear"/></svg></button>
        <button class="ml-5" aria-label="Workspace menu"><svg class="h-[10px] w-5"><use href="#down"/></svg></button>
      </div>
      <button class="ml-[3px] flex w-[60px] items-center justify-center bg-[#3b4453]" aria-label="Annotation monitor"><svg class="size-10" viewBox="0 0 40 40"><path d="M20 0V40M0 20H40" stroke="#dcdcdc" stroke-width="5"/></svg></button>
      <button class="ml-[7px] flex w-[60px] items-center justify-center bg-[#3b4453]" aria-label="Isolate objects"><svg class="size-10" viewBox="0 0 40 40"><path d="M1 1H17V17H1ZM17 26L25 39H9Z" stroke="#dcdcdc" stroke-width="2" fill="none"/><circle cx="31" cy="16" r="8" stroke="#dcdcdc" stroke-width="2" fill="none"/></svg></button>
      <button class="ml-[10px] flex w-[167px] items-center gap-7 bg-[#3b4453] pl-[10px]"><svg class="size-10" viewBox="0 0 40 40"><path d="M5 24V32L20 40V28Z" fill="#dcdcdc"/><path d="M20 28V40L35 32V24Z" fill="#9a9a9a"/><path d="M0 19L20 9L40 19L20 30Z" fill="#6bb3ea"/><path d="M5 10V6L20 1L35 6V10" stroke="#dcdcdc" stroke-width="2" stroke-dasharray="3 3" fill="none"/></svg>3.500</button>
      <div class="ml-2 flex w-[120px] items-center gap-5 bg-[#3b4453] pl-[10px]">
        <button aria-label="Clean screen"><svg class="size-10" viewBox="0 0 40 40"><rect x="1" y="5" width="38" height="29" stroke="#dcdcdc" stroke-width="2" fill="none"/><path d="M27 9H35V17ZM5 22V30H13Z" fill="#dcdcdc"/><path d="M25 19L33 11M15 20L7 28" stroke="#dcdcdc" stroke-width="2"/></svg></button>
        <button aria-label="Customization"><svg class="size-10" viewBox="0 0 40 40"><path d="M0 5H40M0 20H40M0 35H40" stroke="#dcdcdc" stroke-width="5"/></svg></button>
      </div>
    </div>
  </footer>

  <!-- edge of the system taskbar -->
  <div class="flex h-5 shrink-0 overflow-hidden bg-[#1c1c1c]">
    <div class="ml-[1116px] w-[121px] bg-[#5b5d5c]"></div>
    <div class="w-[1440px] bg-gradient-to-r from-[#343737] via-[#2b2725] to-[#3b3f3f]"></div>
    <div class="h-5 w-[100px] bg-gradient-to-r from-[#3b3f3f] to-[#1c1c1c]"></div>
  </div>
</div>

<!-- edge of the desktop -->
<aside class="flex w-[19px] shrink-0 flex-col overflow-hidden text-[17px] leading-[25px] text-white">
  <div class="h-[392px] shrink-0 bg-white"></div>
  <div class="min-h-0 flex-1 overflow-hidden bg-black pt-[862px] pl-[2px]"><p>20</p><p class="pl-1">Re</p><p class="mt-[145px]">20</p><p class="pl-1">Re</p></div>
  <div class="h-[60px] shrink-0 bg-[#1c1c1c]"></div>
  <div class="h-[248px] shrink-0 bg-white"></div>
</aside>
</body>
</html>
